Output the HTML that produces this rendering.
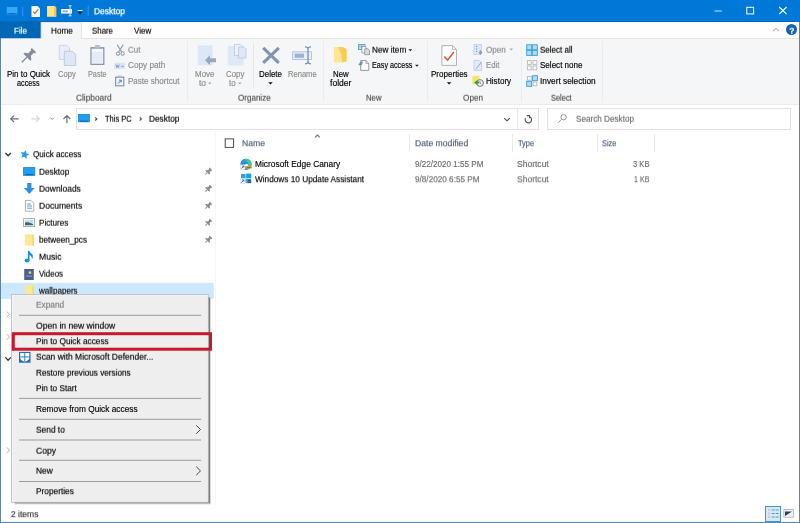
<!DOCTYPE html>
<html lang="en"><head><meta charset="utf-8"><title>Desktop</title>
<style>
html,body{margin:0;padding:0;width:800px;height:523px;overflow:hidden;}
body{width:800px;height:523px;overflow:hidden;background:#fff;position:relative;font-family:"Liberation Sans",sans-serif;font-size:8.8px;}
#w{position:absolute;left:0;top:0;width:800px;height:523px;will-change:transform;}
.tx{position:absolute;left:0;top:0;width:800px;height:521px;will-change:transform;transform-origin:400px 0;}
#t0{transform:translateY(0.02px) rotate(0.004deg);}
#t1{transform:translateY(0.25px) rotate(0.004deg);}
#t2{transform:translateY(0.5px) rotate(0.004deg);}
#t3{transform:translateY(0.75px) rotate(0.004deg);}
.r{position:absolute;display:block;}
.t{position:absolute;white-space:nowrap;line-height:12px;height:12px;transform-origin:0 0;-webkit-text-stroke:0.16px currentColor;}
</style></head><body><div id="w">
<div class="r" style="left:0px;top:0px;width:800px;height:22px;background:#0078d7;"></div>
<div class="r" style="left:0px;top:22px;width:800px;height:16px;background:#fff;"></div>
<div class="r" style="left:0px;top:38px;width:800px;height:67px;background:#f5f6f7;border-top:1px solid #e4e5e6;border-bottom:1px solid #ebecec;box-sizing:border-box;"></div>
<svg class="r" style="left:0px;top:21px;" width="800" height="19" viewBox="0 0 800 19"><rect x="0" y="0" width="800" height="1" fill="#0569c0"/><rect x="0" y="17" width="40.7" height="1.2" fill="#fbfcfc"/><rect x="0" y="1" width="40.7" height="16.3" fill="#0066b6"/></svg>
<div class="r" style="left:41px;top:22px;width:41px;height:17px;background:#f5f6f7;border:1px solid #e4e5e6;border-bottom:none;box-sizing:border-box;"></div>
<div class="r" style="left:187px;top:41px;width:1px;height:61px;background:#ebeced;"></div>
<div class="r" style="left:323px;top:41px;width:1px;height:61px;background:#ebeced;"></div>
<div class="r" style="left:427px;top:41px;width:1px;height:61px;background:#ebeced;"></div>
<div class="r" style="left:520.5px;top:41px;width:1px;height:61px;background:#ebeced;"></div>
<div class="r" style="left:602px;top:41px;width:1px;height:61px;background:#ebeced;"></div>
<div class="r" style="left:253px;top:43px;width:1px;height:44px;background:#e6e7e8;"></div>
<div class="r" style="left:76px;top:108px;width:463px;height:22px;background:#fff;border:1px solid #e1e1e1;box-sizing:border-box;"></div>
<div class="r" style="left:517px;top:109px;width:1px;height:20px;background:#e5e5e5;"></div>
<div class="r" style="left:547px;top:108px;width:244px;height:22px;background:#fff;border:1px solid #e1e1e1;box-sizing:border-box;"></div>
<svg class="r" style="left:0px;top:280px;" width="220" height="22" viewBox="0 0 220 22"><rect x="1" y="2.8" width="212.7" height="16.1" fill="#cce8ff"/></svg>
<div class="r" style="left:215px;top:133px;width:1px;height:372px;background:#f6f6f6;"></div>
<div class="r" style="left:409px;top:134px;width:1px;height:18px;background:#e9e9e9;"></div>
<div class="r" style="left:512px;top:134px;width:1px;height:18px;background:#e9e9e9;"></div>
<div class="r" style="left:597px;top:134px;width:1px;height:18px;background:#e9e9e9;"></div>
<div class="r" style="left:654px;top:134px;width:1px;height:18px;background:#e9e9e9;"></div>
<svg class="r" style="left:220px;top:135px;" width="20" height="18" viewBox="0 0 20 18"><rect x="5.2" y="3.9" width="8.4" height="8.5" fill="#fff" stroke="#4a4a4a" stroke-width="1"/></svg>
<div class="r" style="left:765px;top:506px;width:16px;height:16px;background:#d3eafc;border:1px solid #4a8fc8;box-sizing:border-box;"></div>
<div class="r" style="left:785.8px;top:24.2px;width:11.2px;height:11.2px;background:#1363ad;border-radius:50%;"></div>
<svg class="r" style="left:0px;top:0px;" width="800" height="523" viewBox="0 0 800 523"><rect x="6.8" y="7" width="10.6" height="6.6" fill="#35a8f8"/><path d="M7.6 13.6h9l0.8 1.6h-10.6z" fill="#1b8ae0"/><rect x="8.5" y="13" width="7" height="1.2" fill="#0a6cc4"/><rect x="22.2" y="6.5" width="1" height="9.5" fill="#3b94e2"/><rect x="87.7" y="6" width="1" height="10" fill="#3b94e2"/><path d="M31.5 6h6l2.5 2.5v8.5h-8.5z" fill="#fdfdfd"/><path d="M33.3 11.6l1.6 1.9 3.4-4.3" fill="none" stroke="#d8632f" stroke-width="1.2"/><path d="M47 6h7.5l1.7 1.2v9.6h-9.2z" fill="#ffe48a"/><path d="M54 6.6l2.2 0.8v9.4h-2.2z" fill="#f3c74b"/><rect x="61" y="9" width="11" height="4.6" fill="#f4f8fd"/><rect x="63" y="10.4" width="5" height="1.8" fill="#9ab0d0"/><path d="M68.6 5.8h3M68.6 15.8h3M70.1 5.8v10" stroke="#cfe3f7" stroke-width="1" fill="none"/><rect x="77.6" y="10" width="5" height="1" fill="#e8f1fb"/><path d="M77.4 11.8h5.4l-2.7 2.7z" fill="#0b1a33"/><rect x="714.5" y="10.55" width="7.4" height="0.9" fill="#e4f0fb"/><rect x="746.8" y="7.3" width="6.8" height="6.6" fill="none" stroke="#fff" stroke-width="1"/><path d="M779.2 7l7.4 7.2M786.6 7l-7.4 7.2" stroke="#fff" stroke-width="1.1" fill="none"/><path d="M773 31.2l3-2.8 3 2.8" stroke="#9a9a9a" stroke-width="1" fill="none"/><g transform="translate(27.9 56.2) rotate(45) scale(0.93)" fill="#878d98"><path d="M-3.3 -9.3h6.6v1.6l-1.3 1v4.2l3.2 2.4v1.7h-10.4v-1.7l3.2 -2.4v-4.2l-1.3 -1z"/><rect x="-0.7" y="1.6" width="1.4" height="7.6"/></g><path d="M59.3 45.3h7.4l2.8 2.8v11.4h-10.2z" fill="#e9eef9" stroke="#c3cde0" stroke-width="0.8"/><path d="M64.3 51.3h8.4l3 3v11.2h-11.4z" fill="#dfe7f6" stroke="#b9c4da" stroke-width="0.8"/><rect x="90.4" y="47.2" width="14" height="17.7" fill="#808aa0"/><rect x="91.5" y="48.6" width="11.8" height="15.2" fill="#e9eefb"/><rect x="92.2" y="49.4" width="10.4" height="2.4" fill="#f7f9fe"/><rect x="95" y="45" width="4.8" height="3.6" fill="#b7bdcb"/><path d="M92.5 52.5h9.8M92.5 55h9.8M92.5 57.5h9.8M92.5 60h9.8" stroke="#dbe3f5" stroke-width="0.6"/><path d="M117.2 44.6l4.6 7.6M123.2 44.6l-4.6 7.6" stroke="#8e9db8" stroke-width="1.1" fill="none"/><circle cx="118" cy="53.6" r="1.7" fill="none" stroke="#7f90b0" stroke-width="1"/><circle cx="122.6" cy="53.6" r="1.7" fill="none" stroke="#7f90b0" stroke-width="1"/><rect x="114.2" y="62.8" width="10.8" height="6.2" fill="#d9e4f5"/><path d="M116 64.5l0.8 3 0.8-2.4 0.8 2.4 0.8-3M121.2 66.4h2.6" stroke="#7f95bd" stroke-width="0.8" fill="none"/><rect x="115" y="76.6" width="9.4" height="9.8" fill="#8d97ad"/><rect x="116.2" y="78" width="7" height="7.2" fill="#eef2fc"/><rect x="117.7" y="75.6" width="4" height="2" fill="#b7bdcb"/><path d="M118 83.6l3-3M119 80.2h2.2v2.2" stroke="#4a78c0" stroke-width="1" fill="none"/><rect x="197.8" y="45.3" width="14.8" height="20" fill="#dde7f7"/><path d="M205 60.2l5-5v3h6v4h-6v3z" fill="#93a7cb"/><rect x="227.8" y="45.8" width="15.8" height="19.6" fill="#dee8f7"/><path d="M234.5 44.5h6l2 2v9h-8z" fill="#eef2fb" stroke="#b6c2db" stroke-width="0.7"/><path d="M238.5 47h5.5l2 2v9h-7.5z" fill="#dfe8f7" stroke="#b6c2db" stroke-width="0.7"/><path d="M208 82.6h3.6l-1.8 1.8z" fill="#a8a8a8"/><path d="M238 82.6h3.6l-1.8 1.8z" fill="#a8a8a8"/><path d="M263.2 47.8l15.6 15M278.8 47.8l-15.6 15" stroke="#8394b2" stroke-width="3.1" fill="none"/><path d="M268.2 82.2h4.6l-2.3 2.4z" fill="#111"/><rect x="292.6" y="51.8" width="18.8" height="7.8" fill="#e6edf9" stroke="#a9b9d6" stroke-width="0.8"/><rect x="294.6" y="53.6" width="9.4" height="4.2" fill="#9fb2d3"/><path d="M305 46.8c2 0 3 .6 3 2v13c0 1.4-1 2-3 2M311 46.8c-2 0-3 .6-3 2M311 63.8c-2 0-3-.6-3-2" stroke="#8191ad" stroke-width="1.35" fill="none"/><path d="M334 46.9h8.4l4.2 2.2v12.2l-4.2 1.3h-8.4z" fill="#ffe694"/><path d="M337.8 46.9h4.6l4.2 2.2v12.2l-4.2 1.3-1-8.2z" fill="#f4cc56"/><rect x="358.5" y="44.6" width="6.6" height="5" fill="#bde0f2" stroke="#5b93b8" stroke-width="0.8"/><path d="M361.8 44.6v5M358.5 46.6h6.6" stroke="#6aa0c4" stroke-width="0.6"/><path d="M361.9 46.5h3l1.5 1.5v4.9h-4.5z" fill="#fbfbfc" stroke="#8a8f99" stroke-width="0.8"/><path d="M364.7 48.8h3.2l1.6 1.6v4.3h-4.8z" fill="#dadade" stroke="#8a8f99" stroke-width="0.8"/><path d="M360.7 60.5h5.2l2.9 2.9v7h-8.1z" fill="#fdfdfd" stroke="#8a8f99" stroke-width="0.9"/><path d="M365.9 60.5v2.9h2.9" fill="none" stroke="#8a8f99" stroke-width="0.7"/><path d="M358.2 65.2l2-3.2 2.8-0.8-1.2 4z" fill="#6b8fb5"/><path d="M408.4 49.2h3.8l-1.9 2z" fill="#222"/><path d="M415 64.8h3.8l-1.9 2z" fill="#222"/><path d="M441.9 45.6h10.6l4 4v15.8h-14.6z" fill="#fdfdfd" stroke="#a9aaad" stroke-width="0.9"/><path d="M452.5 45.6v4h4" fill="none" stroke="#a9aaad" stroke-width="0.8"/><path d="M444.4 56.4l3.2 3.6 6.4-8" fill="none" stroke="#d9592c" stroke-width="1.5"/><path d="M446.8 82.2h4.6l-2.3 2.4z" fill="#111"/><rect x="474" y="44.4" width="7.6" height="10" fill="#dbe6f6" stroke="#b3c3de" stroke-width="0.6"/><path d="M476 46.5h1.2M476 49h1.2M476 51.5h1.2" stroke="#6f8fc0" stroke-width="1"/><path d="M480.4 50v3M479 52l1.4 2.4 1.6-2.4z" stroke="#7f96bd" stroke-width="0.8" fill="#7f96bd"/><path d="M474 60.4h5l2.6 2.6v7.4h-7.6z" fill="#e3ecf9" stroke="#b3c3de" stroke-width="0.7"/><path d="M476 69l5.6-7" stroke="#9ab6e0" stroke-width="1.2"/><rect x="472.4" y="75.8" width="7" height="8.6" fill="#f9e26c"/><circle cx="480" cy="83" r="3.4" fill="#f1f1f1" stroke="#6d6d6d" stroke-width="0.9"/><path d="M480 81.2v1.9l1.4 0.8" stroke="#555" stroke-width="0.6" fill="none"/><path d="M474.2 82.6l3-2.4v1.4h2v2h-2v1.4z" fill="#2f9a3e"/><path d="M509.4 48.6h3.6l-1.8 1.9z" fill="#a8a8a8"/><rect x="526.7" y="44.8" width="5" height="5" fill="#a9dcf6" stroke="#3a9fd6" stroke-width="0.9"/><rect x="526.7" y="50.4" width="5" height="5" fill="#a9dcf6" stroke="#3a9fd6" stroke-width="0.9"/><rect x="532.3000000000001" y="44.8" width="5" height="5" fill="#a9dcf6" stroke="#3a9fd6" stroke-width="0.9"/><rect x="532.3000000000001" y="50.4" width="5" height="5" fill="#a9dcf6" stroke="#3a9fd6" stroke-width="0.9"/><rect x="527.4" y="60.6" width="3.8" height="3.8" fill="#fbfbfb" stroke="#b8b8b8" stroke-width="0.9"/><rect x="527.4" y="66.0" width="3.8" height="3.8" fill="#fbfbfb" stroke="#b8b8b8" stroke-width="0.9"/><rect x="533.0" y="60.6" width="3.8" height="3.8" fill="#fbfbfb" stroke="#b8b8b8" stroke-width="0.9"/><rect x="533.0" y="66.0" width="3.8" height="3.8" fill="#fbfbfb" stroke="#b8b8b8" stroke-width="0.9"/><rect x="527.4" y="76.4" width="3.8" height="3.8" fill="#fbfbfb" stroke="#b8b8b8" stroke-width="0.9"/><rect x="532.4" y="75.7" width="5" height="5" fill="#a9dcf6" stroke="#3a9fd6" stroke-width="0.9"/><rect x="526.7" y="81.3" width="5" height="5" fill="#a9dcf6" stroke="#3a9fd6" stroke-width="0.9"/><rect x="533" y="82" width="3.8" height="3.8" fill="#fbfbfb" stroke="#b8b8b8" stroke-width="0.9"/><path d="M10.7 118.8h8M14 115.6l-3.3 3.2 3.3 3.2" stroke="#707070" stroke-width="1.15" fill="none"/><path d="M31.4 118.8h7.8M36 115.6l3.3 3.2-3.3 3.2" stroke="#d6d6d6" stroke-width="1.15" fill="none"/><path d="M50.2 117.5l2 2 2-2" stroke="#8a8a8a" stroke-width="1" fill="none"/><path d="M66.9 123.2v-7.4M63.5 119l3.4-3.4 3.4 3.4" stroke="#666" stroke-width="1.15" fill="none"/><rect x="78.4" y="114.4" width="11" height="7.4" fill="#1e9ff5" stroke="#1a7fd0" stroke-width="0.8"/><rect x="80" y="120.6" width="8" height="1" fill="#0d63b0"/><path d="M95.2 117.3l1.7 1.6-1.7 1.6" stroke="#4a4a4a" stroke-width="1.05" fill="none"/><path d="M139.7 117.3l1.7 1.6-1.7 1.6" stroke="#4a4a4a" stroke-width="1.05" fill="none"/><path d="M504.2 118.2l2.8 2.6 2.8-2.6" stroke="#444" stroke-width="1.1" fill="none"/><path d="M529.600 116.700A3.200 3.200 0 1 1 525.500 118.300" stroke="#505050" stroke-width="1.1" fill="none"/><path d="M526.700 115.600h2.800v2.700" stroke="#505050" stroke-width="1.1" fill="none"/><circle cx="563.6" cy="117.2" r="2.7" stroke="#8a8a8a" stroke-width="0.9" fill="none"/><path d="M561.6 119.2l-3.4 3.6" stroke="#8a8a8a" stroke-width="0.9"/><path d="M5.400 153l2.700 2.800 2.700-2.800" stroke="#333" stroke-width="1.300" fill="none"/><g transform="rotate(14 24.6 154.4)"><path d="M24.8 149.8l1.3 3 3.2 0.3-2.4 2.1 0.7 3.2-2.8-1.7-2.8 1.7 0.7-3.2-2.4-2.1 3.2-0.3z" fill="#2c9af5"/></g><rect x="23.6" y="167.6" width="11.2" height="7.8" fill="#1e9ff5" stroke="#1a80d2" stroke-width="0.8"/><rect x="25.4" y="174" width="7.6" height="1" fill="#0d63b0"/><path d="M27.2 183h4.2v5h3.2l-5.3 6-5.3-6h3.2z" fill="#2e8fe3"/><path d="M25.4 200.4h5.6l2.8 2.8v8h-8.4z" fill="#fbfcfd" stroke="#9a9fa8" stroke-width="0.8"/><path d="M27.2 204h3.6M27.2 206h4.8M27.2 208.2h4.8" stroke="#5a9ed6" stroke-width="1"/><rect x="23.6" y="218.6" width="11" height="8" fill="#fafbfc" stroke="#9a9fa8" stroke-width="0.8"/><rect x="25" y="220" width="8.2" height="5.2" fill="#bfe0f3"/><path d="M25 225.2v-2.4c2-1 4-0.4 8.2 1.4v1z" fill="#3d6a63"/><path d="M24.8 234.2h7.4l1.8 1.2v10.2h-9.2z" fill="#ffe793"/><path d="M32.4 234.89999999999998l1.6 0.7v10h-1.6z" fill="#f9d66e"/><path d="M28.700 250.800v9.600" stroke="#1f8fe3" stroke-width="1.6" fill="none"/><path d="M28.900 250.800c.6 1.900 4 2.700 4 5.600 0 1.100-.3 1.900-.9 2.700 0-2.600-1.400-3.700-3.100-4.100z" fill="#1f8fe3"/><ellipse cx="27.100" cy="260.400" rx="2.500" ry="2" fill="#1f8fe3"/><rect x="24.2" y="269" width="9.6" height="11" fill="#566173"/><rect x="26" y="270.4" width="6" height="8.2" fill="#3c5fa8"/><rect x="28.6" y="271.4" width="2.6" height="2.4" fill="#f2d04a"/><rect x="26" y="275.6" width="6" height="1" fill="#8aa3d6"/><path d="M24.8 285h7.4l1.8 1.2v10.2h-9.2z" fill="#ffe793"/><path d="M32.4 285.7l1.6 0.7v10h-1.6z" fill="#f9d66e"/><g transform="translate(208.2 171.7) rotate(45) scale(0.5)" fill="#8a8a8a"><path d="M-3.6 -8h7.2v1.8l-1.2 1v3.600l3.400 2.400v1.900h-11.600v-1.900l3.400 -2.400v-3.600l-1.200 -1z"/><rect x="-0.9" y="2" width="1.8" height="6"/></g><g transform="translate(208.2 188.73) rotate(45) scale(0.5)" fill="#8a8a8a"><path d="M-3.6 -8h7.2v1.8l-1.2 1v3.600l3.400 2.400v1.900h-11.600v-1.900l3.400 -2.400v-3.600l-1.200 -1z"/><rect x="-0.9" y="2" width="1.8" height="6"/></g><g transform="translate(208.2 205.76) rotate(45) scale(0.5)" fill="#8a8a8a"><path d="M-3.6 -8h7.2v1.8l-1.2 1v3.600l3.400 2.400v1.900h-11.600v-1.900l3.400 -2.400v-3.600l-1.200 -1z"/><rect x="-0.9" y="2" width="1.8" height="6"/></g><g transform="translate(208.2 222.79) rotate(45) scale(0.5)" fill="#8a8a8a"><path d="M-3.6 -8h7.2v1.8l-1.2 1v3.600l3.400 2.400v1.900h-11.600v-1.900l3.400 -2.400v-3.600l-1.200 -1z"/><rect x="-0.9" y="2" width="1.8" height="6"/></g><g transform="translate(208.2 239.82) rotate(45) scale(0.5)" fill="#8a8a8a"><path d="M-3.6 -8h7.2v1.8l-1.2 1v3.600l3.400 2.400v1.900h-11.600v-1.900l3.400 -2.400v-3.600l-1.200 -1z"/><rect x="-0.9" y="2" width="1.8" height="6"/></g><path d="M6.8 311.6l2.8 2.8-2.8 2.8" stroke="#a6a6a6" stroke-width="0.9" fill="none"/><path d="M6.8 334.2l2.8 2.8-2.8 2.8" stroke="#a6a6a6" stroke-width="0.9" fill="none"/><path d="M5.400 357.400l2.700 2.800 2.700-2.800" stroke="#333" stroke-width="1.300" fill="none"/><path d="M6.8 447.4l2.8 2.8-2.8 2.8" stroke="#a6a6a6" stroke-width="0.9" fill="none"/><path d="M315 137.300l2.400-2.300 2.400 2.300" stroke="#707070" stroke-width="1.05" fill="none"/><circle cx="246" cy="164.3" r="5.6" fill="#1b84d4"/><path d="M244.2 159a5.6 5.6 0 0 1 7.4 5.3c0 1.3-.9 2.2-2.4 2.2h-2.2c.6-.5.9-1.200.9-2 0-2.200-1.500-4.300-3.700-5.500z" fill="#3fc98d"/><path d="M241.200 161.600a5.6 5.6 0 0 1 3.200-2.700c1.600.8 2.800 2.300 3.100 4.100-1.700-.9-4.500-.6-6.300 1.400z" fill="#2a9be3"/><ellipse cx="246.500" cy="165.200" rx="1.700" ry="1.500" fill="#f3f9fe"/><rect x="245.600" y="166" width="6.300" height="2.500" fill="#f0b429"/><rect x="246.600" y="166.800" width="4.300" height="0.900" fill="#6b4e10"/><rect x="240.200" y="164.800" width="4.800" height="4.800" fill="#f7f9fc" stroke="#c9d2e0" stroke-width="0.5"/><path d="M241.400 168.600l2.200-2.400M242.200 166h1.600v1.600" stroke="#1c4fa8" stroke-width="0.8" fill="none"/><rect x="241" y="174" width="4.6" height="4.2" fill="#27a5e6"/><rect x="246.2" y="173.6" width="5" height="4.6" fill="#1f9be0"/><rect x="241" y="178.8" width="4.6" height="4" fill="#27a5e6"/><rect x="246.2" y="178.8" width="5" height="4.4" fill="#1f9be0"/><rect x="240.2" y="178.8" width="4.8" height="4.8" fill="#f7f9fc" stroke="#c9d2e0" stroke-width="0.5"/><path d="M241.4 182.6l2.2-2.4M242.2 180h1.6v1.6" stroke="#1c4fa8" stroke-width="0.8" fill="none"/><circle cx="249.6" cy="181.4" r="1.6" fill="#2d3e57"/><path d="M248.8 181.4l0.7 0.7 1-1.3" stroke="#d8f0c0" stroke-width="0.5" fill="none"/><path d="M768 510h2M768 513.5h2M768 517h2" stroke="#dfc3cb" stroke-width="1.8"/><path d="M771.6 510h3M775.6 510h3M771.6 513.5h3M775.6 513.5h3M771.6 517h3M775.6 517h3" stroke="#6a8fb5" stroke-width="1"/><rect x="783.8" y="509.6" width="9.6" height="7.6" fill="#eef2f8" stroke="#a7aebb" stroke-width="0.8"/><path d="M785 511.4h7l-7 4.6z" fill="#2f3d52"/></svg>
<svg class="r" style="left:5px;top:288px;" width="215" height="225" viewBox="0 0 215 225"><rect x="10.4" y="10.4" width="195.6" height="206" fill="#6e6e6e" opacity="0.28"/><rect x="9.4" y="9.4" width="195.6" height="205.9" fill="#808080"/><rect x="6.4" y="6.4" width="196.8" height="207.8" fill="#f7f7f7" stroke="#b9b9b9" stroke-width="0.8"/><rect x="7.6" y="7.6" width="194.6" height="205.4" fill="#eeeeee"/></svg>
<svg class="r" style="left:0px;top:300px;" width="220" height="200" viewBox="0 0 220 200"><rect x="19" y="14.8" width="182" height="1" fill="#9c9c9c"/><rect x="19" y="97.9" width="182" height="1" fill="#9c9c9c"/><rect x="19" y="118.8" width="182" height="1" fill="#9c9c9c"/><rect x="19" y="139.5" width="182" height="1" fill="#9c9c9c"/><rect x="19" y="159.8" width="182" height="1" fill="#9c9c9c"/><rect x="19" y="181.0" width="182" height="1" fill="#9c9c9c"/></svg>
<svg class="r" style="left:5px;top:325px;" width="215" height="32" viewBox="0 0 215 32"><rect x="8.3" y="8.7" width="197.2" height="15.5" fill="none" stroke="#c9182c" stroke-width="3"/></svg>
<svg class="r" style="left:0px;top:0px;" width="800" height="523" viewBox="0 0 800 523"><rect x="19" y="351.9" width="11.5" height="10.8" fill="#1a70c0"/><path d="M20.2 353h9.1v4.6c0 2.2-1.8 3.4-4.55 4.4-2.75-1-4.55-2.2-4.55-4.4z" fill="#fff"/><path d="M24.75 353v9M20.2 356.9h9.1" stroke="#1a70c0" stroke-width="0.9" fill="none"/><path d="M196.2 425.2l4.3 4.3-4.3 4.3" stroke="#333" stroke-width="0.9" fill="none"/><path d="M196.2 466.6l4.3 4.3-4.3 4.3" stroke="#333" stroke-width="0.9" fill="none"/></svg>
<div class="r" style="left:0px;top:38px;width:1px;height:485px;background:#61839f;"></div>
<div class="r" style="left:799px;top:22px;width:1px;height:501px;background:#5f85a5;"></div>
<div class="r" style="left:0px;top:522px;width:800px;height:1px;background:#558abe;"></div>
</div>
<div class="tx" id="t0">
<div class="t" style="left:6.79px;top:67.95px;color:#000;transform:scaleX(0.9084);">Pin to Quick</div>
<div class="t" style="left:17.14px;top:76.95px;color:#000;transform:scaleX(0.8222);">access</div>
<div class="t" style="left:57.86px;top:67.95px;color:#8c8c8c;transform:scaleX(0.8666);">Copy</div>
<div class="t" style="left:87.85px;top:67.95px;color:#8c8c8c;transform:scaleX(0.8275);">Paste</div>
<div class="t" style="left:128.08px;top:58.95px;color:#8c8c8c;transform:scaleX(0.931);">Copy path</div>
<div class="t" style="left:128.04px;top:74.95px;color:#8c8c8c;transform:scaleX(0.9141);">Paste shortcut</div>
<div class="t" style="left:195.3px;top:67.95px;color:#8c8c8c;transform:scaleX(0.9042);">Move</div>
<div class="t" style="left:199.07px;top:76.95px;color:#8c8c8c;transform:scaleX(0.9435);">to</div>
<div class="t" style="left:225.6px;top:67.95px;color:#8c8c8c;transform:scaleX(0.8915);">Copy</div>
<div class="t" style="left:229.08px;top:76.95px;color:#8c8c8c;transform:scaleX(0.9069);">to</div>
<div class="t" style="left:259.05px;top:67.95px;color:#000;transform:scaleX(0.9024);">Delete</div>
<div class="t" style="left:287.83px;top:67.95px;color:#8c8c8c;transform:scaleX(0.8616);">Rename</div>
<div class="t" style="left:333.11px;top:67.95px;color:#000;transform:scaleX(0.8903);">New</div>
<div class="t" style="left:330.33px;top:76.95px;color:#000;transform:scaleX(0.9751);">folder</div>
<div class="t" style="left:372.06px;top:58.95px;color:#000;transform:scaleX(0.8179);">Easy access</div>
<div class="t" style="left:431.04px;top:67.95px;color:#000;transform:scaleX(0.9138);">Properties</div>
<div class="t" style="left:486.06px;top:58.95px;color:#8c8c8c;transform:scaleX(0.8833);">Edit</div>
<div class="t" style="left:486.04px;top:74.95px;color:#000;transform:scaleX(0.9178);">History</div>
<div class="t" style="left:539.73px;top:58.95px;color:#000;transform:scaleX(0.9149);">Select none</div>
<div class="t" style="left:539.68px;top:74.95px;color:#000;transform:scaleX(0.942);">Invert selection</div>
<div class="t" style="left:254.76px;top:157.95px;color:#000;transform:scaleX(0.9514);">Microsoft Edge Canary</div>
<div class="t" style="left:414.97px;top:157.95px;color:#6d6d6d;transform:scaleX(0.9197);">9/22/2020 1:55 PM</div>
<div class="t" style="left:517.21px;top:157.95px;color:#6d6d6d;transform:scaleX(0.9688);">Shortcut</div>
<div class="t" style="left:632.86px;top:157.95px;color:#6d6d6d;transform:scaleX(0.8616);">3 KB</div>
<div class="t" style="left:36.27px;top:402.95px;color:#000;transform:scaleX(0.9447);">Remove from Quick access</div>
</div>
<div class="tx" id="t1">
<div class="t" style="left:93.51px;top:4.78px;color:#fff;transform:scaleX(0.9086);font-size:9.3px;-webkit-text-stroke:0.25px #fff;">Desktop</div>
<div class="t" style="left:32.67px;top:147.95px;color:#000;transform:scaleX(0.9226);">Quick access</div>
<div class="t" style="left:241.84px;top:136.95px;color:#4c5d76;transform:scaleX(0.9816);">Name</div>
<div class="t" style="left:414.74px;top:136.95px;color:#4c5d76;transform:scaleX(0.9801);">Date modified</div>
<div class="t" style="left:517.78px;top:136.95px;color:#4c5d76;transform:scaleX(0.8406);">Type</div>
<div class="t" style="left:602.26px;top:136.95px;color:#4c5d76;transform:scaleX(0.8452);">Size</div>
<div class="t" style="left:255.41px;top:172.95px;color:#000;transform:scaleX(0.9371);">Windows 10 Update Assistant</div>
<div class="t" style="left:414.97px;top:172.95px;color:#6d6d6d;transform:scaleX(0.9299);">9/8/2020 6:55 PM</div>
<div class="t" style="left:517.21px;top:172.95px;color:#6d6d6d;transform:scaleX(0.9688);">Shortcut</div>
<div class="t" style="left:633.91px;top:172.95px;color:#6d6d6d;transform:scaleX(0.8053);">1 KB</div>
<div class="t" style="left:10.52px;top:507.95px;color:#333;transform:scaleX(0.9655);">2 items</div>
<div class="t" style="left:36.27px;top:334.95px;color:#000;transform:scaleX(0.9412);">Pin to Quick access</div>
<div class="t" style="left:36.27px;top:381.95px;color:#000;transform:scaleX(0.9393);">Pin to Start</div>
<div class="t" style="left:36.27px;top:484.95px;color:#000;transform:scaleX(0.9432);">Properties</div>
</div>
<div class="tx" id="t3">
<div class="t" style="left:14.29px;top:23.95px;color:#fff;transform:scaleX(0.9145);">File</div>
<div class="t" style="left:50.53px;top:23.95px;color:#000;transform:scaleX(0.9257);">Home</div>
<div class="t" style="left:92.24px;top:23.95px;color:#000;transform:scaleX(0.8946);">Share</div>
<div class="t" style="left:134.16px;top:23.95px;color:#000;transform:scaleX(0.9157);">View</div>
<div class="t" style="left:76.08px;top:90.95px;color:#505050;transform:scaleX(0.9454);">Clipboard</div>
<div class="t" style="left:238.12px;top:90.95px;color:#505050;transform:scaleX(0.9141);">Organize</div>
<div class="t" style="left:366.06px;top:90.95px;color:#505050;transform:scaleX(0.8844);">New</div>
<div class="t" style="left:462.86px;top:90.95px;color:#505050;transform:scaleX(0.9324);">Open</div>
<div class="t" style="left:551.01px;top:90.95px;color:#505050;transform:scaleX(0.8461);">Select</div>
<div class="t" style="left:128.1px;top:42.95px;color:#8c8c8c;transform:scaleX(0.9027);">Cut</div>
<div class="t" style="left:371.98px;top:42.95px;color:#000;transform:scaleX(0.9344);">New item</div>
<div class="t" style="left:486.12px;top:42.95px;color:#8c8c8c;transform:scaleX(0.9202);">Open</div>
<div class="t" style="left:539.74px;top:42.95px;color:#000;transform:scaleX(0.9087);">Select all</div>
<div class="t" style="left:105.28px;top:111.95px;color:#000;transform:scaleX(0.8517);">This PC</div>
<div class="t" style="left:148.52px;top:111.95px;color:#000;transform:scaleX(0.9442);">Desktop</div>
<div class="t" style="left:576.23px;top:111.95px;color:#6d6d6d;transform:scaleX(0.9266);">Search Desktop</div>
<div class="t" style="left:38.67px;top:164.95px;color:#000;transform:scaleX(0.9394);">Desktop</div>
<div class="t" style="left:38.66px;top:181.95px;color:#000;transform:scaleX(0.9613);">Downloads</div>
<div class="t" style="left:38.65px;top:198.95px;color:#000;transform:scaleX(0.972);">Documents</div>
<div class="t" style="left:38.68px;top:215.95px;color:#000;transform:scaleX(0.9253);">Pictures</div>
<div class="t" style="left:38.83px;top:232.95px;color:#000;transform:scaleX(0.925);">between_pcs</div>
<div class="t" style="left:38.64px;top:249.95px;color:#000;transform:scaleX(0.9784);">Music</div>
<div class="t" style="left:39.32px;top:266.95px;color:#000;transform:scaleX(0.8964);">Videos</div>
<div class="t" style="left:39.36px;top:283.95px;color:#000;transform:scaleX(0.9183);clip-path:inset(0 0 2.3px 0);">wallpapers</div>
<div class="t" style="left:789.26px;top:24.05px;color:#fff;transform:scaleX(1);font-size:8.5px;font-weight:700;">?</div>
<div class="t" style="left:36.27px;top:297.95px;color:#7a7a7a;transform:scaleX(0.9437);">Expand</div>
<div class="t" style="left:36.34px;top:318.95px;color:#000;transform:scaleX(0.9758);">Open in new window</div>
<div class="t" style="left:36.21px;top:349.95px;color:#000;transform:scaleX(0.9639);">Scan with Microsoft Defender...</div>
<div class="t" style="left:36.28px;top:365.95px;color:#000;transform:scaleX(0.931);">Restore previous versions</div>
<div class="t" style="left:36.22px;top:422.95px;color:#000;transform:scaleX(0.9504);">Send to</div>
<div class="t" style="left:36.31px;top:443.95px;color:#000;transform:scaleX(0.9836);">Copy</div>
<div class="t" style="left:36.26px;top:463.95px;color:#000;transform:scaleX(0.9554);">New</div>
</div>
</body></html>
